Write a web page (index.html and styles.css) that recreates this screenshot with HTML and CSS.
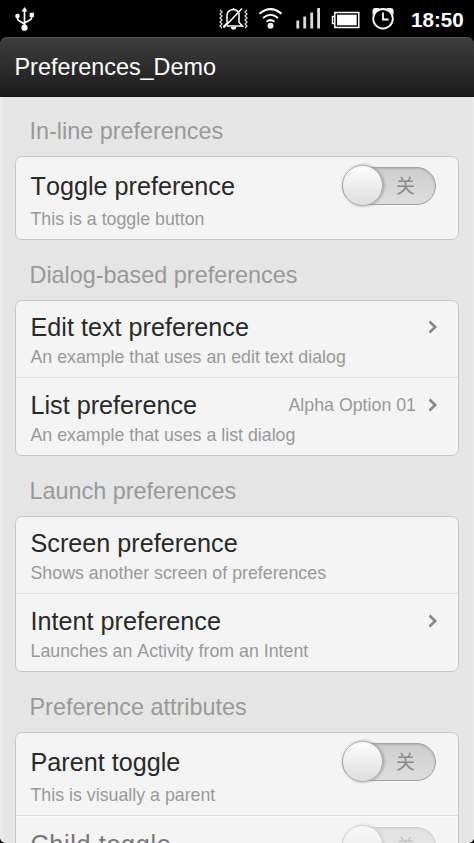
FILE: index.html
```html
<!DOCTYPE html>
<html lang="en">
<head>
<meta charset="utf-8">
<title>Preferences_Demo</title>
<link rel="stylesheet" href="styles.css">
</head>
<body>
<div class="screen">
  <header class="status">
    <svg class="usb" width="20" height="24" viewBox="0 0 20 24" fill="none" stroke="#fff" stroke-width="1.7">
      <path d="M9.500 3v17M2.500 8v3.500q0 1.500 1.500 2.200L9.500 17M16.700 7v3.500q0 1.500-1.500 2.200L9.500 16"/>
      <path d="M9.500 0l3 4.500h-6z" fill="#fff" stroke="none"/>
      <circle cx="2.500" cy="9" r="2.300" fill="#fff" stroke="none"/>
      <rect x="14.700" y="5.800" width="4.200" height="4.200" fill="#fff" stroke="none"/>
      <circle cx="9.500" cy="20.700" r="3.100" fill="#fff" stroke="none"/>
    </svg>
    <svg class="icons" width="180" height="24" viewBox="218 7 180 24" fill="none" stroke="#fff">
      <path stroke-width="1.2" stroke="#ddd" d="M220 10l2 2-2 2 2 2-2 2 2 2-2 2 2 2-2 2 2 2M247 10l-2 2 2 2-2 2 2 2-2 2 2 2-2 2 2 2-2 2"/>
      <path stroke-width="1.5" d="M227 22v-6q0-6 6.300-6.500q4 0 5.700 4v9l3.500 3.500H227M233.500 8v2M242 8.500L224 27.500"/>
      <path stroke="none" fill="#fff" d="M230.500 27h6q-.6 2.700-3 2.700t-3-2.700zM223 28v-2l5-5 1 1z"/>
      <path stroke-width="2" d="M259.500 13.800Q270.500 4.500 281.500 13.800M263 18Q270.500 11.500 278 18M266.500 21.700Q270.500 18.600 274.500 21.700"/>
      <circle cx="270.500" cy="25.700" r="3" fill="#eee" stroke="none"/>
      <path stroke="#ddd" stroke-width="2.800" d="M297.800 28.500v-8M304.700 28.500v-12M311.700 28.500v-16M318.600 28.500V8"/>
      <path stroke-width="1.500" d="M334.800 12.500h24v15h-24zM334 16.500h-1.500v7h1.500"/>
      <path stroke="none" fill="#fff" d="M337 14.700h19.700v10.600H337z"/>
      <circle cx="383" cy="18.800" r="9.800" stroke-width="1.800"/>
      <path stroke-width="1.800" d="M383 12.500v7h5.500"/>
      <path fill="#fff" stroke="none" d="M372.500 15v-4q0-3 3-3h4zM393.500 15v-4q0-3-3-3h-4z"/>
    </svg>
    <span class="clock">18:50</span>
  </header>
  <h1 class="titlebar">Preferences_Demo</h1>
  <main class="content">
    <h2 class="heading first">In-line preferences</h2>
    <section class="card">
      <div class="row tall">
        <div class="title">Toggle preference</div>
        <div class="sub">This is a toggle button</div>
        <div class="switch"><span class="knob"></span><span class="state">关</span></div>
      </div>
    </section>
    <h2 class="heading">Dialog-based preferences</h2>
    <section class="card">
      <div class="row">
        <div class="title">Edit text preference</div>
        <div class="sub">An example that uses an edit text dialog</div>
        <div class="end"><svg class="chevron" width="10" height="14" viewBox="0 0 10 14"><path d="M1.500 1.500L7.200 7L1.500 12.500"/></svg></div>
      </div>
      <div class="row">
        <div class="title">List preference</div>
        <div class="sub">An example that uses a list dialog</div>
        <div class="end"><span class="value">Alpha Option 01</span><svg class="chevron" width="10" height="14" viewBox="0 0 10 14"><path d="M1.500 1.500L7.200 7L1.500 12.500"/></svg></div>
      </div>
    </section>
    <h2 class="heading">Launch preferences</h2>
    <section class="card">
      <div class="row">
        <div class="title">Screen preference</div>
        <div class="sub">Shows another screen of preferences</div>
      </div>
      <div class="row">
        <div class="title">Intent preference</div>
        <div class="sub">Launches an Activity from an Intent</div>
        <div class="end"><svg class="chevron" width="10" height="14" viewBox="0 0 10 14"><path d="M1.500 1.500L7.200 7L1.500 12.500"/></svg></div>
      </div>
    </section>
    <h2 class="heading">Preference attributes</h2>
    <section class="card">
      <div class="row tall">
        <div class="title">Parent toggle</div>
        <div class="sub">This is visually a parent</div>
        <div class="switch"><span class="knob"></span><span class="state">关</span></div>
      </div>
      <div class="row tall disabled">
        <div class="title">Child toggle</div>
        <div class="switch"><span class="knob"></span><span class="state">关</span></div>
      </div>
    </section>
  </main>
  <i class="corner left"></i><i class="corner right"></i>
</div>
</body>
</html>
```
FILE: styles.css
```css
* { box-sizing: border-box; }
body {
  margin: 0;
  background: #000;
  font-family: "Liberation Sans", "Noto Sans CJK SC", sans-serif;
  font-kerning: none;
}
.screen {
  position: relative;
  display: flex;
  flex-direction: column;
  width: 474px;
  height: 843px;
  overflow: hidden;
}
.status {
  display: flex;
  flex: none;
  height: 37px;
  padding: 7px 9px 0 15px;
  color: #fff;
}
.icons { margin-left: 183px; }
.clock {
  margin-left: 13px;
  font-size: 20.6px;
  font-weight: bold;
  line-height: 25px;
}
.titlebar {
  flex: none;
  height: 60px;
  margin: 0;
  padding-left: 14.5px;
  border-top: 1px solid #555;
  border-bottom: 1px solid #111;
  border-radius: 7px 7px 0 0;
  background: linear-gradient(#3e3e3e, #1b1b1b);
  color: #fff;
  font-size: 23.4px;
  font-weight: normal;
  line-height: 58px;
}
.content {
  flex: 1;
  min-height: 0;
  padding: 0 15px;
  overflow: hidden;
  background: linear-gradient(90deg, #ececec, #e5e5e5 5px, #e5e5e5 469px, #e9e9e9);
}
.heading {
  height: 60px;
  margin: 0;
  padding: 20px 0 0 14.5px;
  color: #999;
  font-size: 23.4px;
  font-weight: normal;
  line-height: 30px;
}
.heading.first { height: 59px; padding-top: 19px; }
.card {
  border: 1px solid #c6c6c6;
  border-radius: 7px;
  background: #f4f4f4;
}
.row {
  position: relative;
  height: 76px;
  padding: 11px 14px 0 14.5px;
}
.row + .row {
  height: 78px;
  padding-top: 12px;
  border-top: 1px solid #dadada;
  box-shadow: inset 0 1px #fafafa;
}
.row.tall { height: 82px; padding-top: 14px; }
.title {
  color: #292929;
  font-size: 25.2px;
  line-height: 30px;
}
.sub {
  margin-top: 3px;
  color: #999;
  font-size: 17.8px;
  line-height: 24px;
}
.tall .sub { margin-top: 6px; }
.end {
  position: absolute;
  top: 14px;
  right: 20px;
  display: flex;
  align-items: center;
  gap: 12px;
  height: 24px;
}
.row + .row .end { top: 15px; }
.value {
  color: #999;
  font-size: 17.8px;
  line-height: 24px;
}
.chevron {
  fill: none;
  stroke: #888;
  stroke-width: 2.6;
}
.switch {
  position: absolute;
  top: 10px;
  right: 22px;
  width: 94px;
  height: 38px;
  border: 1px solid #a2a2a2;
  border-radius: 19px;
  background: linear-gradient(#cdcdcd, #dedede);
  box-shadow: inset 0 1px 2px #b0b0b0;
}
.knob {
  position: absolute;
  top: -3px;
  left: -1px;
  width: 41px;
  height: 41px;
  border: 1px solid #aaa;
  border-radius: 50%;
  background: linear-gradient(#fcfcfc, #dedede);
  box-shadow: 1px 0 3px #999;
}
.state {
  position: absolute;
  top: 4px;
  left: 53px;
  color: #8b8b8b;
  font-family: "Noto Sans CJK SC", sans-serif;
  font-size: 19px;
  line-height: 26px;
}
.row + .row.disabled { padding-top: 13px; }
.disabled .title { color: #777; letter-spacing: 0.65px; }
.disabled .switch { top: 11px; opacity: 0.45; }
.corner {
  position: absolute;
  bottom: 0;
  width: 5px;
  height: 5px;
}
.left { left: 0; background: radial-gradient(circle at 100% 0, transparent 4.5px, #000 5px); }
.right { right: 0; background: radial-gradient(circle at 0 0, transparent 4.5px, #000 5px); }
```
